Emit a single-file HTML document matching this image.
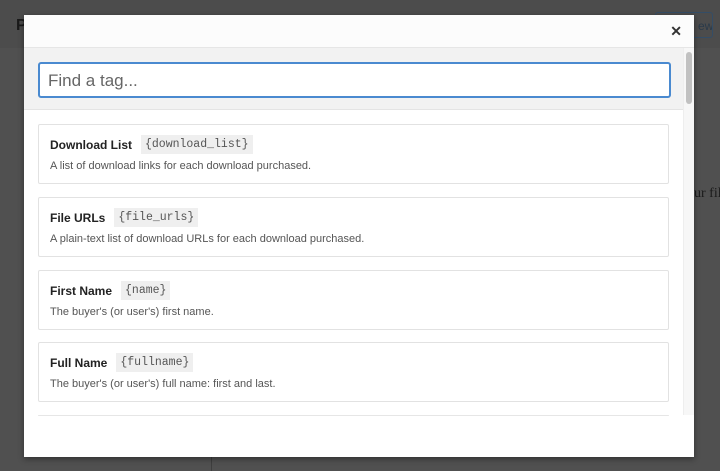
<!DOCTYPE html>
<html><head><style>
*{margin:0;padding:0;box-sizing:border-box}
body{width:720px;height:471px;background:#505050;position:relative;overflow:hidden;font-family:"Liberation Sans",sans-serif}
.bgtop{position:absolute;left:0;top:0;width:720px;height:48px;background:#4c4c4c}
.pl{position:absolute;left:16px;top:17px;color:#1a1a1a;font-weight:bold;font-size:16px}
.btn{position:absolute;left:655px;top:12px;width:58px;height:26px;border:1px solid #344d66;border-radius:3px;color:#2a3a4a;font-size:12px;padding:6px 0 0 42px;white-space:nowrap;overflow:hidden}
.fil{position:absolute;left:694px;top:186px;color:#1a1a1a;font-family:"Liberation Serif",serif;font-size:14px;white-space:nowrap}
.vline{position:absolute;left:211px;top:457px;width:1px;height:14px;background:#3e3e3e}
.modal{position:absolute;left:24px;top:15px;width:670px;height:442px;background:#fff;box-shadow:0 2px 6px rgba(0,0,0,.4)}
.hdr{height:33px;background:#fcfcfc;border-bottom:1px solid #e6e6e6;position:relative}
.x{position:absolute;right:12px;top:8px;font-size:14px;font-weight:bold;color:#333}
.search{position:absolute;left:0;top:33px;width:659px;height:62px;background:#f2f2f2;border-bottom:1px solid #e4e4e4}
.inp{position:absolute;left:14px;top:14px;width:633px;height:36px;border:2px solid #4a8ad0;border-radius:3px;background:#fff;font-size:17px;color:#666;padding:7px 8px}
.sb{position:absolute;left:659px;top:33px;width:11px;height:367px;background:#f7f7f7;border-left:1px solid #eee}
.thumb{position:absolute;left:2px;top:4px;width:6px;height:52px;background:#c1c1c1;border-radius:3px}
.card{position:absolute;left:14px;width:631px;height:60px;border:1px solid #e2e2e2;border-radius:2px;background:#fff}
.t{position:absolute;left:11px;top:10px;font-size:12px;color:#222;font-weight:bold;display:flex;align-items:center}
.t code{font-family:"Liberation Mono",monospace;font-weight:normal;font-size:11.5px;color:#555;background:#efefef;padding:3px 4px;margin-left:9px}
.d{position:absolute;left:11px;top:35px;font-size:11px;color:#555}
</style></head><body>
<div class="bgtop"></div><div class="pl">P</div><div class="btn">ew</div><div class="fil">ur file</div><div class="vline"></div>
<div class="modal">
<div class="hdr"><span class="x">✕</span></div>
<div class="search"><div class="inp">Find a tag...</div></div>
<div class="sb"><div class="thumb"></div></div>
<div class="card" style="top:109px"><div class="t">Download List <code>{download_list}</code></div><div class="d">A list of download links for each download purchased.</div></div>
<div class="card" style="top:182px"><div class="t">File URLs <code>{file_urls}</code></div><div class="d">A plain-text list of download URLs for each download purchased.</div></div>
<div class="card" style="top:255px"><div class="t">First Name <code>{name}</code></div><div class="d">The buyer's (or user's) first name.</div></div>
<div class="card" style="top:327px"><div class="t">Full Name <code>{fullname}</code></div><div class="d">The buyer's (or user's) full name: first and last.</div></div>
<div class="card" style="top:400px;height:1px;border:none;background:#e6e6e6"></div>
</div>
</body></html>
